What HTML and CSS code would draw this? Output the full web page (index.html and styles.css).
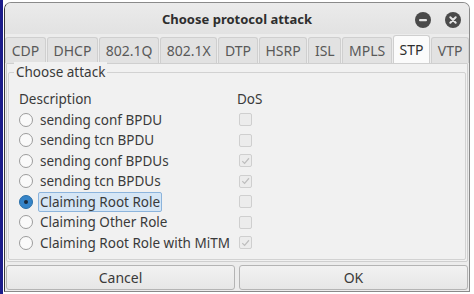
FILE: index.html
```html
<!DOCTYPE html>
<html>
<head>
<meta charset="utf-8">
<link rel="stylesheet" href="styles.css">
</head>
<body>
<div class="desk">
  <div class="strip"></div>
  <div class="window">
    <div class="titlebar">
      <div class="title">Choose protocol attack</div>
      <div class="wbtns">
        <span class="wbtn"><svg width="16" height="16" viewBox="0 0 16 16"><circle cx="8" cy="8" r="8" fill="#4a4a4a"/><rect x="4" y="7" width="8" height="2.2" rx="1" fill="#e6e6e6"/></svg></span>
        <span class="wbtn"><svg width="16" height="16" viewBox="0 0 16 16"><circle cx="8" cy="8" r="8" fill="#4a4a4a"/><path d="M5.3 5.3 L10.7 10.7 M10.7 5.3 L5.3 10.7" stroke="#e6e6e6" stroke-width="2" stroke-linecap="round"/></svg></span>
      </div>
    </div>
    <div class="tabs">
      <div class="tab">CDP</div>
      <div class="tab">DHCP</div>
      <div class="tab">802.1Q</div>
      <div class="tab">802.1X</div>
      <div class="tab">DTP</div>
      <div class="tab">HSRP</div>
      <div class="tab">ISL</div>
      <div class="tab">MPLS</div>
      <div class="tab active">STP</div>
      <div class="tab">VTP</div>
    </div>
    <div class="panel">
      <div class="group">
        <div class="legend">Choose attack</div>
        <div class="grid">
          <div class="hdr">Description</div><div class="hdr">DoS</div>
          <div class="opt"><span class="radio"></span><span class="lbl">sending conf BPDU</span></div><div class="cb"></div>
          <div class="opt"><span class="radio"></span><span class="lbl">sending tcn BPDU</span></div><div class="cb"></div>
          <div class="opt"><span class="radio"></span><span class="lbl">sending conf BPDUs</span></div><div class="cb checked"><svg width="12" height="12" viewBox="0 0 12 12"><path d="M2.5 6.2 L5 8.6 L9.8 3" fill="none" stroke="#bdbdbd" stroke-width="1.3"/></svg></div>
          <div class="opt"><span class="radio"></span><span class="lbl">sending tcn BPDUs</span></div><div class="cb checked"><svg width="12" height="12" viewBox="0 0 12 12"><path d="M2.5 6.2 L5 8.6 L9.8 3" fill="none" stroke="#bdbdbd" stroke-width="1.3"/></svg></div>
          <div class="opt"><span class="radio on"></span><span class="lbl focus">Claiming Root Role</span></div><div class="cb"></div>
          <div class="opt"><span class="radio"></span><span class="lbl">Claiming Other Role</span></div><div class="cb"></div>
          <div class="opt"><span class="radio"></span><span class="lbl">Claiming Root Role with MiTM</span></div><div class="cb checked"><svg width="12" height="12" viewBox="0 0 12 12"><path d="M2.5 6.2 L5 8.6 L9.8 3" fill="none" stroke="#bdbdbd" stroke-width="1.3"/></svg></div>
        </div>
      </div>
    </div>
    <div class="buttons">
      <div class="btn">Cancel</div>
      <div class="btn">OK</div>
    </div>
  </div>
</div>
</body>
</html>
```
FILE: styles.css
```css
* { box-sizing: border-box; }
html, body { margin: 0; padding: 0; background: #ffffff; }
body { font-family: "Noto Sans", "Open Sans", sans-serif; color: #3a3a3a; }
.desk { display: flex; width: 474px; height: 294px; overflow: hidden; }
.strip { width: 3px; height: 294px; background: #1c1c8a; }
.window {
  margin: 2px 0 0 1px;
  width: 466px; height: 290px;
  background: #ececec;
  border: 1px solid #8a8a8a;
  border-left-color: #3a3a3a;
  border-radius: 7px 7px 0 0;
  display: flex; flex-direction: column;
}
.titlebar {
  height: 31px; position: relative; flex: none;
  display: flex; align-items: center; justify-content: center;
  background: linear-gradient(#ebebeb, #e2e2e2);
  border-radius: 6px 6px 0 0;
}
.title { font-weight: bold; font-size: 13px; color: #2e2e2e; margin-top: 1px; }
.wbtns { position: absolute; right: 8px; top: 8px; display: flex; gap: 14px; }
.wbtn { display: block; width: 16px; height: 16px; }
.tabs { display: flex; gap: 1px; padding: 0; height: 29px; align-items: flex-end; flex: none; }
.tab {
  flex: 1 1 auto; text-align: center;
  height: 26px; padding: 0 4px;
  font-size: 14px; line-height: 25px; color: #595959;
  background: #e2e2e2;
  border: 1px solid #cfcfcf; border-bottom: none;
  border-radius: 3px 3px 0 0;
  white-space: nowrap;
}
.tab.active { background: #fbfbfb; height: 28px; line-height: 27px; color: #2e2e2e; }
.panel {
  flex: 1 1 0; min-height: 0; background: #f1f1f1;
  display: flex; flex-direction: column;
  border: 1px solid #cfcfcf; border-radius: 0 0 2px 2px;
  margin: 0 1px 0 1px; padding: 8px 1px 1px 1px;
}
.group {
  flex: 1; position: relative;
  border: 1px solid #d2d2d2; border-radius: 2px;
  padding: 16px 0 0 10px;
}
.legend {
  position: absolute; left: 5px; top: -11px; padding: 0 2px;
  background: #f1f1f1; font-size: 13.5px; color: #3a3a3a; line-height: 20px;
}
.grid { display: grid; grid-template-columns: 218px auto; grid-auto-rows: 20.5px; align-items: center; }
.hdr { font-size: 13.5px; color: #3a3a3a; }
.opt { display: flex; align-items: center; gap: 5px; font-size: 13.5px; white-space: nowrap; }
.radio {
  width: 14px; height: 14px; border-radius: 50%;
  border: 1px solid #9c9c9c; background: #fafafa; flex: none; position: relative;
}
.radio.on { background: #3584c8; border-color: #2a6fa8; }
.radio.on::after {
  content: ""; position: absolute; left: 4px; top: 4px; width: 4px; height: 4px;
  border-radius: 50%; background: #1b2a3a;
}
.lbl { padding: 0 2px; line-height: 18px; }
.lbl.focus { background: #d6e6f5; border: 1px solid #8cb4dc; border-radius: 2px; padding: 0 1px; }
.cb {
  width: 13px; height: 13px; margin-left: 2px;
  border: 1px solid #cfcfcf; border-radius: 2px; background: #ececec;
  display: flex; align-items: center; justify-content: center;
}
.buttons { display: flex; gap: 4px; padding: 3px 1px 1px 1px; height: 29px; flex: none; }
.btn {
  flex: 1; border: 1px solid #b4b4b4; border-radius: 3px;
  background: linear-gradient(#f2f2f2, #e6e6e6);
  font-size: 14px; text-align: center; line-height: 23px; color: #3a3a3a;
}
```
